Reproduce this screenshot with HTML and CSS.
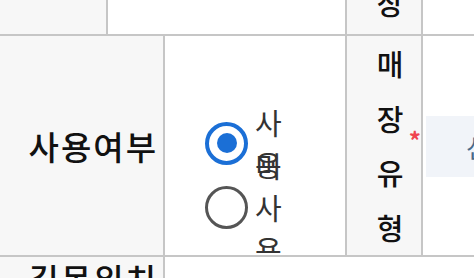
FILE: index.html
```html
<!DOCTYPE html>
<html lang="ko">
<head>
<meta charset="utf-8">
<link rel="stylesheet" href="styles.css">
</head>
<body>
<div class="form">
  <div class="row r1">
    <div class="cell lab a1"></div>
    <div class="cell val b1"></div>
    <div class="cell lab c1"><span class="vt top">장</span></div>
    <div class="cell val d1"></div>
  </div>
  <div class="row r2">
    <div class="cell lab a2"><span class="title">사용여부</span></div>
    <div class="cell val b2">
      <div class="opts">
        <label class="opt o1"><span class="radio on"><span class="dot"></span></span><span class="otext">사용</span></label>
        <label class="opt o2"><span class="radio"></span><span class="otext">미사용</span></label>
      </div>
    </div>
    <div class="cell lab c2"><span class="vt">매장유형</span><span class="req">*</span></div>
    <div class="cell val d2"><div class="select">선택</div></div>
  </div>
  <div class="row r3">
    <div class="cell lab a3"><span class="title">길목위치</span></div>
    <div class="cell val b3"></div>
  </div>
</div>
</body>
</html>
```
FILE: styles.css
```css
html, body {
  margin: 0;
  padding: 0;
  background: #ffffff;
}
body {
  width: 474px;
  height: 278px;
  overflow: hidden;
  font-family: "Noto Sans CJK KR", "Noto Sans", sans-serif;
  color: #222;
}
.form {
  width: 520px;
}
.row {
  display: flex;
  border-bottom: 2px solid #c6c6c6;
}
.cell {
  box-sizing: border-box;
  overflow: hidden;
  position: relative;
}
.lab {
  background: #f7f7f7;
}
.val {
  background: #ffffff;
}
.r1 { height: 34px; }
.r2 { height: 219px; }
.r3 { height: 40px; border-bottom: none; }

.a1 { width: 108px; border-right: 2px solid #c6c6c6; }
.b1 { width: 239px; border-right: 2px solid #c6c6c6; }
.c1 { width: 76px; border-right: 2px solid #c6c6c6; padding-left: 12px; }
.d1 { flex: 1; }

.a2, .a3 {
  width: 165px;
  border-right: 2px solid #c6c6c6;
  display: flex;
  align-items: center;
  justify-content: flex-end;
  padding-right: 5px;
}
.b2 { width: 182px; border-right: 2px solid #c6c6c6; padding: 65px 0 0 40px; }
.c2 { width: 76px; border-right: 2px solid #c6c6c6; padding-left: 12px; }
.d2 { flex: 1; padding-top: 80px; padding-left: 3px; }
.b3 { flex: 1; }

.title {
  font-size: 33px;
  font-weight: 500;
  letter-spacing: 2px;
  color: #111;
  line-height: 40px;
}
.a3 { align-items: flex-start; padding-top: 2px; }

.vt {
  display: block;
  width: 32px;
  margin: 0 auto;
  font-size: 29px;
  font-weight: 500;
  line-height: 54.5px;
  text-align: center;
  word-break: break-all;
  color: #111;
}
.vt.top { margin-top: -25px; }
.req {
  position: absolute;
  right: 0;
  top: 92px;
  color: #f0454f;
  font-size: 24px;
  font-weight: 700;
  line-height: 24px;
}

.opts {
  display: flex;
  flex-direction: column;
}
.opt {
  display: flex;
  align-items: center;
}
.o1 { margin-bottom: -41px; }
.otext {
  width: 30px;
  margin-left: 7px;
  font-size: 29px;
  line-height: 42px;
  word-break: break-all;
  color: #333;
}
.radio {
  box-sizing: border-box;
  width: 43px;
  height: 43px;
  border-radius: 50%;
  border: 3px solid #555;
  background: #fff;
  display: flex;
  align-items: center;
  justify-content: center;
  flex: none;
}
.radio.on {
  border: 4px solid #1b6fd6;
}
.dot {
  width: 20px;
  height: 20px;
  border-radius: 50%;
  background: #1b6fd6;
}
.select {
  height: 61px;
  background: #f1f4f9;
  padding-left: 40px;
  font-size: 26px;
  line-height: 61px;
  color: #4a6a8a;
}
```
